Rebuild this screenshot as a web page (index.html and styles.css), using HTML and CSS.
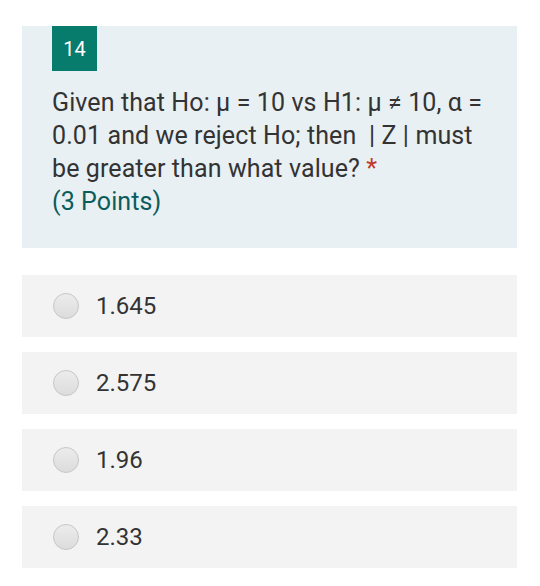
FILE: index.html
```html
<!DOCTYPE html>
<html lang="en">
<head>
<meta charset="utf-8">
<title>Question 14</title>
<link rel="stylesheet" href="styles.css">
</head>
<body>
<div class="page">
  <section class="question">
    <div class="badge">14</div>
    <div class="q-text">Given that Ho: μ = 10 vs H1: μ ≠ 10, α = 0.01 and we reject Ho; then &nbsp;| Z | must be greater than what value? <span class="req">*</span></div>
    <div class="points">(3 Points)</div>
  </section>
  <div class="options">
    <label class="option"><span class="radio"></span><span class="opt-text">1.645</span></label>
    <label class="option"><span class="radio"></span><span class="opt-text">2.575</span></label>
    <label class="option"><span class="radio"></span><span class="opt-text">1.96</span></label>
    <label class="option"><span class="radio"></span><span class="opt-text">2.33</span></label>
  </div>
</div>
</body>
</html>
```

FILE: styles.css
```css
html, body {
  margin: 0;
  padding: 0;
  background: #ffffff;
}
body {
  font-family: Roboto, "Noto Sans", "Liberation Sans", sans-serif;
  color: #333333;
}
.page {
  padding: 26px 23px 0 22px;
  display: flex;
  flex-direction: column;
  gap: 27px;
}
.question {
  background: #e8f0f3;
  padding: 0 28px 30px 30px;
  display: flex;
  flex-direction: column;
  align-items: flex-start;
}
.badge {
  width: 45px;
  height: 45px;
  background: #077b6c;
  color: #ffffff;
  font-size: 20px;
  display: flex;
  align-items: center;
  justify-content: center;
  margin-bottom: 15px;
}
.q-text {
  font-size: 25px;
  line-height: 33px;
  letter-spacing: 0.1px;
  color: #333333;
}
.req {
  color: #c0392b;
}
.points {
  font-size: 25px;
  line-height: 33px;
  letter-spacing: 0.1px;
  color: #0b5c5a;
}
.options {
  display: flex;
  flex-direction: column;
  gap: 15px;
}
.option {
  background: #f3f3f3;
  height: 62px;
  display: flex;
  align-items: center;
  padding-left: 31px;
  gap: 17px;
}
.radio {
  width: 24px;
  height: 24px;
  border-radius: 50%;
  border: 1px solid #c6c6c6;
  background: linear-gradient(#ececec, #dcdcdc);
  flex: none;
}
.opt-text {
  font-size: 24px;
  color: #333333;
}
```
